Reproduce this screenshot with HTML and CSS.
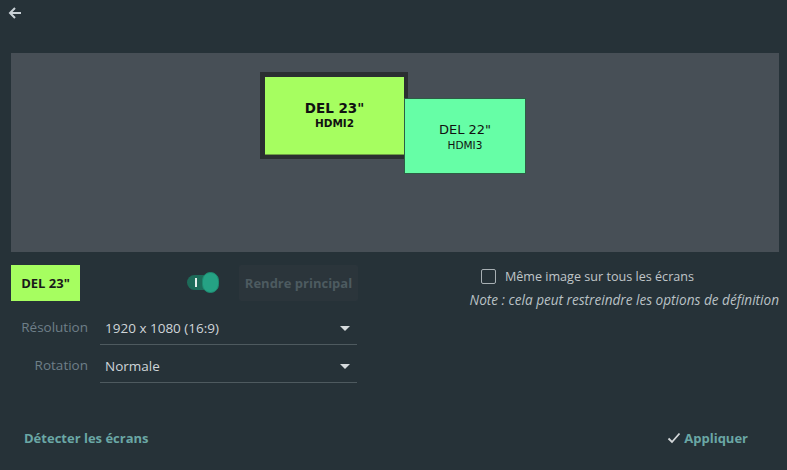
FILE: index.html
```html
<!DOCTYPE html>
<html lang="fr">
<head>
<meta charset="utf-8">
<link rel="stylesheet" href="styles.css">
</head>
<body>
<div class="app">
  <div class="topbar">
    <svg class="back" width="14" height="12" viewBox="0 0 14 12"><path d="M7 1 L2 6 L7 11 M2 6 H13" fill="none" stroke="#c9d1d6" stroke-width="2"/></svg>
  </div>
  <div class="canvas">
    <div class="mon mon1"><div class="mon1-in"><span class="mname b">DEL 23"</span><span class="mport b">HDMI2</span></div></div>
    <div class="mon mon2"><span class="mname">DEL 22"</span><span class="mport">HDMI3</span></div>
  </div>
  <div class="controls">
    <div class="left">
      <div class="row1">
        <div class="tag">DEL 23"</div>
        <div class="toggle"><span class="mark"></span><span class="knob"></span></div>
        <div class="btn-main">Rendre principal</div>
      </div>
      <div class="field first">
        <span class="flabel">Résolution</span>
        <div class="combo"><span>1920 x 1080 (16:9)</span><span class="arrow"></span></div>
      </div>
      <div class="field">
        <span class="flabel">Rotation</span>
        <div class="combo"><span>Normale</span><span class="arrow"></span></div>
      </div>
    </div>
    <div class="right">
      <label class="check"><span class="box"></span>Même image sur tous les écrans</label>
      <div class="note">Note : cela peut restreindre les options de définition</div>
    </div>
  </div>
  <div class="footer">
    <span class="detect">Détecter les écrans</span>
    <span class="apply"><svg width="14" height="12" viewBox="0 0 14 12"><path d="M1.5 6.5 L5 10 L12.5 1.5" fill="none" stroke="#d4d8da" stroke-width="1.8"/></svg>Appliquer</span>
  </div>
</div>
</body>
</html>
```
FILE: styles.css
```css
* { box-sizing: border-box; }
html, body { margin: 0; padding: 0; background: #263238; }
body { font-family: "Open Sans", "Noto Sans", sans-serif; font-size: 13px; color: #c5cbce; }
.app { width: 787px; height: 470px; display: flex; flex-direction: column; }
.topbar { height: 53px; padding: 7px 0 0 8px; }
.back { display: block; }
.canvas { margin: 0 8px 0 11px; height: 199px; background: #474f56; position: relative; }
.mon { position: absolute; display: flex; flex-direction: column; align-items: center; justify-content: center; font-family: "DejaVu Sans", sans-serif; color: #111; }
.mon1 { left: 249px; top: 19px; width: 148px; height: 87px; background: #2b2f31; padding: 5px 4px 4px 5px; }
.mon1-in { width: 100%; height: 100%; background: #a6fe60; border-bottom: 1px solid #6fa044; display: flex; flex-direction: column; align-items: center; justify-content: center; padding-bottom: 2px; }
.mon2 { left: 393px; top: 45px; width: 122px; height: 76px; background: #66fea6; border: 1px solid #2d5e44; padding-top: 2px; }
.mname { font-size: 13px; line-height: 16px; }
.mon1 .mname { font-size: 13.5px; }
.mport { font-size: 10.5px; line-height: 14px; }
.b { font-weight: bold; }
.controls { display: flex; padding-top: 13px; }
.left { width: 460px; }
.row1 { display: flex; align-items: center; height: 36px; padding-left: 11px; }
.tag { width: 69px; height: 36px; background: #a6fe60; color: #1a1a1a; font-weight: bold; font-size: 13px; display: flex; align-items: center; justify-content: center; }
.toggle { margin-left: 107px; width: 33px; height: 22px; position: relative; }
.toggle::before { content: ""; position: absolute; left: 0; top: 3px; width: 28px; height: 15px; border-radius: 8px; background: #1d6b59; }
.mark { position: absolute; left: 8px; top: 6px; width: 2px; height: 9px; background: #e6efec; }
.knob { position: absolute; left: 15px; top: 0; width: 17px; height: 21px; border-radius: 9px; background: #25a284; border: 1.5px solid #1e8a70; }
.btn-main { margin-left: 19px; width: 119px; height: 36px; background: #2b353b; color: #4d5b60; font-weight: bold; display: flex; align-items: center; justify-content: center; border-radius: 2px; }
.field { display: flex; align-items: flex-end; height: 38px; font-size: 13.5px; }
.field.first { margin-top: 6px; }
.flabel { width: 88px; text-align: right; color: #6e7f88; padding-bottom: 9px; }
.combo { margin-left: 12px; width: 257px; height: 30px; border-bottom: 1px solid #4e5a5f; display: flex; align-items: center; justify-content: space-between; padding: 0 5px 3px; color: #cfd5d8; }
.arrow { width: 0; height: 0; border-left: 5px solid transparent; border-right: 5px solid transparent; border-top: 5px solid #d6dbdd; margin-right: 2px; }
.right { flex: 1; display: flex; flex-direction: column; align-items: flex-end; padding-right: 8px; padding-top: 2px; }
.check { display: flex; align-items: center; gap: 9px; color: #c0c6c9; margin-right: 85px; height: 18px; font-size: 12.6px; }
.box { width: 15px; height: 15px; border: 1.5px solid #a8b0b4; border-radius: 2px; }
.note { font-style: italic; color: #b9c1c5; margin-top: 5px; font-size: 13.6px; }
.footer { margin-top: auto; height: 41px; display: flex; justify-content: space-between; align-items: flex-start; padding: 0 39px 0 24px; font-weight: bold; color: #6aa7a5; }
.apply { display: flex; align-items: center; gap: 3px; }
.apply svg { display: block; }
```
